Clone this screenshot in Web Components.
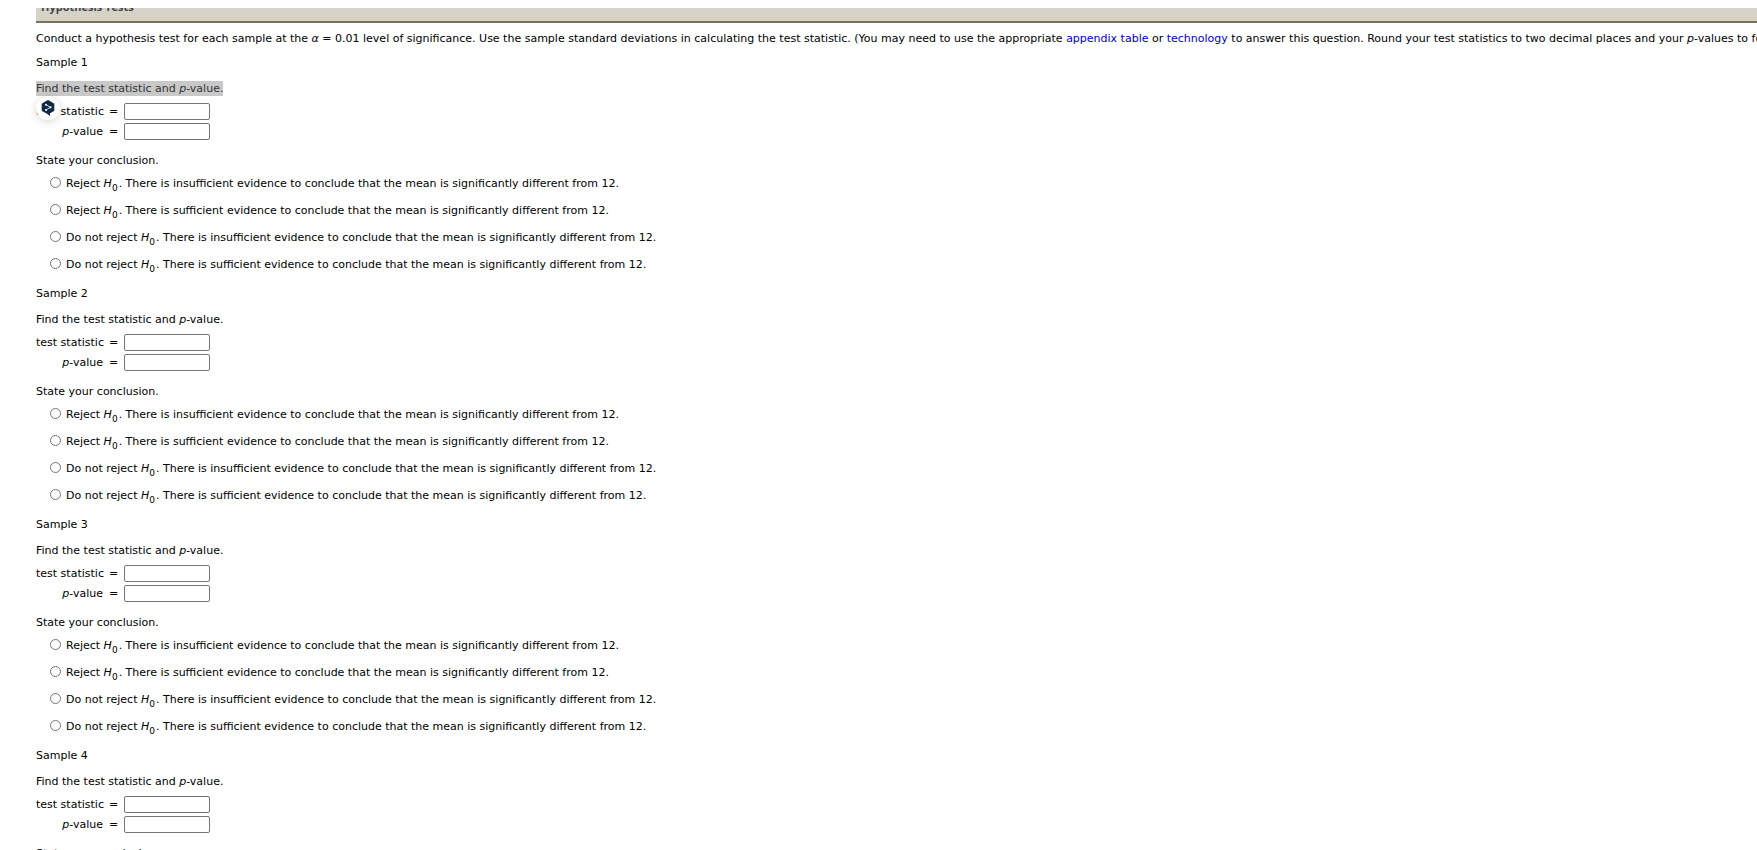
<!DOCTYPE html>
<html lang="en">
<head>
<meta charset="utf-8">
<title>Hypothesis Tests</title>
<style>
    body {
        margin: 0;
        height: 100vh;
        overflow: hidden;
        background: #fff;
        color: #000;
        font: 11px/16px Verdana, "DejaVu Sans", sans-serif;
        --color-link: #0000cc;
        --color-bar: #d6d2c7;
        --color-bar-edge: #7c705a;
        --color-field: #767676;
    }
</style>
</head>
<body>
<question-page>
    <section-bar slot="bar">Hypothesis Tests</section-bar>
    <question-intro></question-intro>
    <sample-question number="1" selected></sample-question>
    <sample-question number="2"></sample-question>
    <sample-question number="3"></sample-question>
    <sample-question number="4"></sample-question>
</question-page>

<script>
class QuestionPage extends HTMLElement {
    constructor() {
        super();
        this.attachShadow({ mode: 'open' });
    }

    connectedCallback() {
        this.shadowRoot.innerHTML = `
            <style>
                :host {
                    display: block;
                    padding: 8px 0 0 36px;
                }
                main {
                    display: flex;
                    flex-direction: column;
                    padding-top: 8px;
                }
            </style>
            <slot name="bar"></slot>
            <main><slot></slot></main>
        `;
    }
}

class SectionBar extends HTMLElement {
    constructor() {
        super();
        this.attachShadow({ mode: 'open' });
    }

    connectedCallback() {
        this.shadowRoot.innerHTML = `
            <style>
                :host {
                    display: flex;
                    align-items: flex-end;
                    height: 13px;
                    overflow: hidden;
                    padding: 0 5px;
                    background: var(--color-bar);
                    border-bottom: 2px solid var(--color-bar-edge);
                }
                h2 {
                    margin: 0;
                    padding-bottom: 6px;
                    color: #444;
                    font: bold 11px/16px "Open Sans", sans-serif;
                }
            </style>
            <h2><slot></slot></h2>
        `;
    }
}

class QuestionIntro extends HTMLElement {
    constructor() {
        super();
        this.attachShadow({ mode: 'open' });
    }

    connectedCallback() {
        this.shadowRoot.innerHTML = `
            <style>
                :host {
                    display: block;
                    overflow: hidden;
                    white-space: nowrap;
                }
                p {
                    margin: 0;
                }
                a {
                    color: var(--color-link);
                    text-decoration: none;
                }
            </style>
            <p>Conduct a hypothesis test for each sample at the <i>α</i> = 0.01 level of significance. Use the sample standard deviations in calculating the test statistic. (You may need to use the appropriate <a href="#table">appendix table</a> or <a href="#technology">technology</a> to answer this question. Round your test statistics to two decimal places and your <i>p</i>-values to four decimal places.)</p>
        `;
    }
}

class TranslateBadge extends HTMLElement {
    constructor() {
        super();
        this.attachShadow({ mode: 'open' });
    }

    connectedCallback() {
        this.shadowRoot.innerHTML = `
            <style>
                :host {
                    display: block;
                }
                button {
                    display: grid;
                    place-items: center;
                    width: 24px;
                    height: 24px;
                    padding: 0;
                    border: 0;
                    border-radius: 50%;
                    background: #fff;
                    box-shadow: 0 2px 8px rgba(0, 0, 0, 0.15);
                }
            </style>
            <button type="button" aria-label="Translate">
                <svg width="14" height="16" viewBox="0 0 14 16">
                    <path fill="#0f2b46" d="M6.4.3a1.3 1.3 0 0 1 1.2 0l5 2.9c.4.2.7.6.7 1.100v5.8c0 .5-.3.9-.7 1.100L9 13.3V16l-3-2.200-4.600-2.600c-.4-.2-.7-.6-.7-1.100V4.300c0-.5.3-.9.7-1.100z"/>
                    <path fill="none" stroke="#fff" stroke-width=".8" d="M5 4.700l4.500 2.600L5 9.900"/>
                    <circle cx="5" cy="4.700" r="1" fill="#fff"/>
                    <circle cx="9.500" cy="7.300" r="1.100" fill="#fff"/>
                    <circle cx="5" cy="9.900" r="1" fill="#fff"/>
                </svg>
            </button>
        `;
    }
}

class AnswerField extends HTMLElement {
    constructor() {
        super();
        this.attachShadow({ mode: 'open' });
    }

    connectedCallback() {
        this.shadowRoot.innerHTML = `
            <style>
                :host {
                    display: grid;
                    grid-template-columns: 67px 21px auto;
                    justify-content: start;
                    align-items: center;
                }
                label {
                    display: contents;
                    white-space: nowrap;
                }
                .name {
                    text-align: right;
                }
                .equals {
                    text-align: center;
                }
                input {
                    box-sizing: border-box;
                    width: 86px;
                    height: 17px;
                    margin: 0;
                    padding: 1px 2px;
                    border: 1px solid var(--color-field);
                    border-radius: 2px;
                    font: inherit;
                }
            </style>
            <label>
                <span class="name"><slot></slot></span>
                <span class="equals">=</span>
                <input type="text">
            </label>
        `;
    }
}

class ConclusionChoices extends HTMLElement {
    constructor() {
        super();
        this.attachShadow({ mode: 'open' });
    }

    connectedCallback() {
        const choices = [
            ['Reject', 'insufficient'],
            ['Reject', 'sufficient'],
            ['Do not reject', 'insufficient'],
            ['Do not reject', 'sufficient']
        ];
        this.shadowRoot.innerHTML = `
            <style>
                :host {
                    display: flex;
                    flex-direction: column;
                    gap: 11px;
                    padding-left: 14px;
                }
                label {
                    display: flex;
                    align-items: flex-start;
                    gap: 5px;
                    height: 16px;
                    white-space: nowrap;
                }
                input {
                    appearance: none;
                    box-sizing: border-box;
                    flex: none;
                    width: 11px;
                    height: 11px;
                    margin: 1px 0 0;
                    border: 1px solid var(--color-field);
                    border-radius: 50%;
                }
                input:checked {
                    background: radial-gradient(#0075ff 3px, #fff 4px);
                }
                sub {
                    padding-right: 1px;
                    font-size: 9px;
                    line-height: 0;
                    vertical-align: -4px;
                }
            </style>
            ${choices.map(([verb, amount]) => `
            <label>
                <input type="radio" name="conclusion">
                <span>${verb} <i>H</i><sub>0</sub>. There is ${amount} evidence to conclude that the mean is significantly different from 12.</span>
            </label>`).join('')}
        `;
    }
}

class SampleQuestion extends HTMLElement {
    constructor() {
        super();
        this.attachShadow({ mode: 'open' });
    }

    connectedCallback() {
        const selected = this.hasAttribute('selected');
        this.shadowRoot.innerHTML = `
            <style>
                :host {
                    display: block;
                    padding-top: 8px;
                }
                p {
                    margin: 0 0 10px;
                }
                .fields {
                    position: relative;
                    display: flex;
                    flex-direction: column;
                    gap: 3px;
                    margin: -4px 0 13px;
                }
                .selected {
                    padding: 1px 0;
                    background: #c8c8c8;
                    color: #333;
                }
                .state {
                    margin-bottom: 7px;
                }
                conclusion-choices {
                    margin-bottom: 5px;
                }
                translate-badge {
                    position: absolute;
                    left: 0;
                    top: -7px;
                }
            </style>
            <p>Sample ${this.getAttribute('number')}</p>
            <p><span class="${selected ? 'selected' : ''}">Find the test statistic and <i>p</i>-value.</span></p>
            <div class="fields">
                <answer-field>test statistic</answer-field>
                <answer-field><i>p</i>-value</answer-field>
                ${selected ? '<translate-badge></translate-badge>' : ''}
            </div>
            <p class="state">State your conclusion.</p>
            <conclusion-choices></conclusion-choices>
        `;
    }
}

customElements.define('question-page', QuestionPage);
customElements.define('section-bar', SectionBar);
customElements.define('question-intro', QuestionIntro);
customElements.define('translate-badge', TranslateBadge);
customElements.define('answer-field', AnswerField);
customElements.define('conclusion-choices', ConclusionChoices);
customElements.define('sample-question', SampleQuestion);
</script>
</body>
</html>
